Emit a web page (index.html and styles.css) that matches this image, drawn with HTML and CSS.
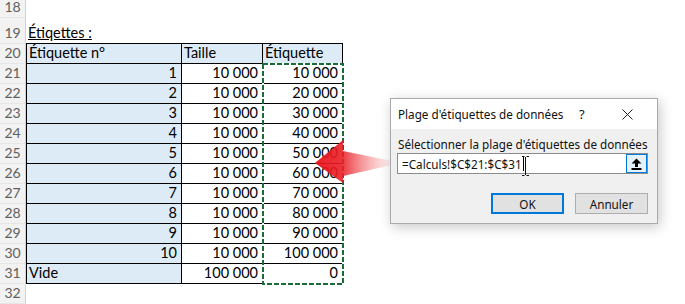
FILE: index.html
```html
<!DOCTYPE html>
<html>
<head>
    <meta charset="UTF-8">
    <title>Calculs</title>
    <link rel="stylesheet" href="styles.css">
</head>
<body>
    <div class="sheet">
        <div class="row r18"><div class="num">18</div></div>
        <div class="row r19"><div class="num">19</div><div class="cell title"><u>Étiqettes :</u></div></div>
        <div class="row"><div class="num">20</div><div class="cell a blue">Étiquette n°</div><div class="cell b blue">Taille</div><div class="cell c blue">Étiquette</div></div>
        <div class="row"><div class="num">21</div><div class="cell a blue nb">1</div><div class="cell b nb">10 000</div><div class="cell c nb">10 000</div></div>
        <div class="row"><div class="num">22</div><div class="cell a blue nb">2</div><div class="cell b nb">10 000</div><div class="cell c nb">20 000</div></div>
        <div class="row"><div class="num">23</div><div class="cell a blue nb">3</div><div class="cell b nb">10 000</div><div class="cell c nb">30 000</div></div>
        <div class="row"><div class="num">24</div><div class="cell a blue nb">4</div><div class="cell b nb">10 000</div><div class="cell c nb">40 000</div></div>
        <div class="row"><div class="num">25</div><div class="cell a blue nb">5</div><div class="cell b nb">10 000</div><div class="cell c nb">50 000</div></div>
        <div class="row"><div class="num">26</div><div class="cell a blue nb">6</div><div class="cell b nb">10 000</div><div class="cell c nb">60 000</div></div>
        <div class="row"><div class="num">27</div><div class="cell a blue nb">7</div><div class="cell b nb">10 000</div><div class="cell c nb">70 000</div></div>
        <div class="row"><div class="num">28</div><div class="cell a blue nb">8</div><div class="cell b nb">10 000</div><div class="cell c nb">80 000</div></div>
        <div class="row"><div class="num">29</div><div class="cell a blue nb">9</div><div class="cell b nb">10 000</div><div class="cell c nb">90 000</div></div>
        <div class="row"><div class="num">30</div><div class="cell a blue nb">10</div><div class="cell b nb">10 000</div><div class="cell c nb">100 000</div></div>
        <div class="row"><div class="num">31</div><div class="cell a blue">Vide</div><div class="cell b nb">100 000</div><div class="cell c nb">0</div></div>
        <div class="row"><div class="num">32</div></div>

        <!-- copy marquee around C21:C31 -->
        <svg class="ants" width="84" height="224" viewBox="0 0 84 224">
            <rect x="2" y="2" width="80" height="220" fill="none" stroke="#fff" stroke-width="2"/>
            <rect x="2" y="2" width="80" height="220" fill="none" stroke="#1b6a3a" stroke-width="2" stroke-dasharray="5 2"/>
        </svg>

        <!-- pointer from the dialog to the copied range -->
        <svg class="arrow" width="84" height="48" viewBox="0 0 84 48">
            <defs>
                <linearGradient id="fade" x1="0" y1="0" x2="1" y2="0">
                    <stop offset="0" stop-color="#e8121b" stop-opacity="0.95"/>
                    <stop offset="0.35" stop-color="#ea1f26" stop-opacity="0.9"/>
                    <stop offset="1" stop-color="#f7a0a0" stop-opacity="0.15"/>
                </linearGradient>
            </defs>
            <polygon points="3,25 31,2 31,13 80,23 80,27 31,38 31,45" fill="url(#fade)"/>
        </svg>
    </div>

    <div class="dialog">
        <div class="dlg-title">
            <span class="dlg-name">Plage d'étiquettes de données</span>
            <span class="dlg-help">?</span>
            <svg class="dlg-close" width="11" height="11" viewBox="0 0 11 11">
                <path d="M0.5 0.5 L10.5 10.5 M10.5 0.5 L0.5 10.5" stroke="#222" stroke-width="1"/>
            </svg>
        </div>
        <div class="dlg-body">
            <div class="dlg-label">Sélectionner la plage d'étiquettes de données</div>
            <div class="ref-box">
                <span class="ref-text">=Calculs!$C$21:$C$31</span><span class="caret"></span>
                <svg class="ibeam" width="7" height="20" viewBox="0 0 7 20">
                    <path d="M0 0.5 H2.5 M4.5 0.5 H7 M3.5 1 V19 M0 19.5 H2.5 M4.5 19.5 H7" stroke="#111" stroke-width="1"/>
                </svg>
                <span class="collapse">
                    <svg width="11" height="12" viewBox="0 0 11 12">
                        <path d="M5.5 0.5 L10.5 5.5 H7 V9 H4 V5.5 H0.5 Z" fill="#000"/>
                        <rect x="0.5" y="10" width="10" height="2" fill="#000"/>
                    </svg>
                </span>
            </div>
            <div class="dlg-buttons">
                <button class="btn default">OK</button>
                <button class="btn">Annuler</button>
            </div>
        </div>
    </div>
</body>
</html>
```

FILE: styles.css
```css
*{
    margin: 0;
    padding: 0;
    box-sizing: border-box;
}
html,body{
    height: 100%;
}
body{
    background-color: white;
    overflow: hidden;
    font-family: Lato, "Liberation Sans", sans-serif;
    font-size: 14.5px;
    color: black;
}
.sheet{
    position: relative;
}
.row{
    display: flex;
    height: 20px;
}
.r18{
    height: 18px;
}
.r19{
    height: 26px;
}
.num{
    width: 26px;
    background-color: #f2f2f2;
    border-right: 1px solid #d2d2d2;
    border-bottom: 1px solid #e6e6e6;
    color: #5e5e5e;
    text-align: center;
    display: flex;
    align-items: flex-end;
    justify-content: center;
    padding-bottom: 3px;
    font-size: 14px;
    line-height: 14px;
}
.r18 .num{
    padding-bottom: 4px;
    line-height: 12px;
}
.cell{
    border-right: 1px solid black;
    border-bottom: 1px solid black;
    display: flex;
    align-items: flex-end;
    padding: 0 4px 2px 2px;
    white-space: nowrap;
}
.title{
    width: 317px;
    border-right: 0;
    padding-bottom: 2px;
}
.a{
    width: 156px;
    border-left: 1px solid black;
}
.b{
    width: 81px;
}
.c{
    width: 80px;
}
.blue{
    background-color: #ddebf7;
}
.nb{
    justify-content: flex-end;
}
.ants{
    position: absolute;
    left: 261px;
    top: 62px;
}
.arrow{
    position: absolute;
    left: 312px;
    top: 138px;
}

/* range picker dialog */
.dialog{
    position: absolute;
    left: 390px;
    top: 98px;
    width: 268px;
    height: 126px;
    border: 1px solid #a9a9a9;
    background-color: #f0f0f0;
    box-shadow: 2px 3px 12px rgba(0, 0, 0, 0.22);
    font-family: "Noto Sans", "Open Sans", sans-serif;
    font-size: 11.7px;
    color: #111;
}
.dlg-title{
    height: 30px;
    background-color: white;
    display: flex;
    align-items: center;
    padding-left: 7px;
}
.dlg-name{
    flex: 1;
}
.dlg-help{
    width: 12px;
    margin-right: 31px;
    font-size: 13px;
}
.dlg-close{
    margin-right: 24px;
}
.dlg-body{
    padding: 7px 9px 0 6px;
}
.dlg-label{
    height: 17px;
    padding-left: 1px;
}
.ref-box{
    position: relative;
    height: 21px;
    background-color: white;
    border: 1px solid #8c8c8c;
    display: flex;
    align-items: center;
    padding-left: 4px;
}
.caret{
    width: 1px;
    height: 14px;
    background-color: black;
    margin-left: 1px;
}
.ibeam{
    position: absolute;
    left: 124px;
    top: 2px;
}
.collapse{
    margin-left: auto;
    width: 21px;
    height: 19px;
    border: 1px solid #0078d7;
    background-color: #e5f1fb;
    display: flex;
    align-items: center;
    justify-content: center;
}
.dlg-buttons{
    display: flex;
    justify-content: flex-end;
    gap: 11px;
    margin-top: 19px;
}
.btn{
    width: 73px;
    height: 21px;
    border: 1px solid #adadad;
    background-color: #e1e1e1;
    font-family: "Noto Sans", "Open Sans", sans-serif;
    font-size: 11.7px;
    color: #111;
}
.btn.default{
    border: 2px solid #0078d7;
}
```
